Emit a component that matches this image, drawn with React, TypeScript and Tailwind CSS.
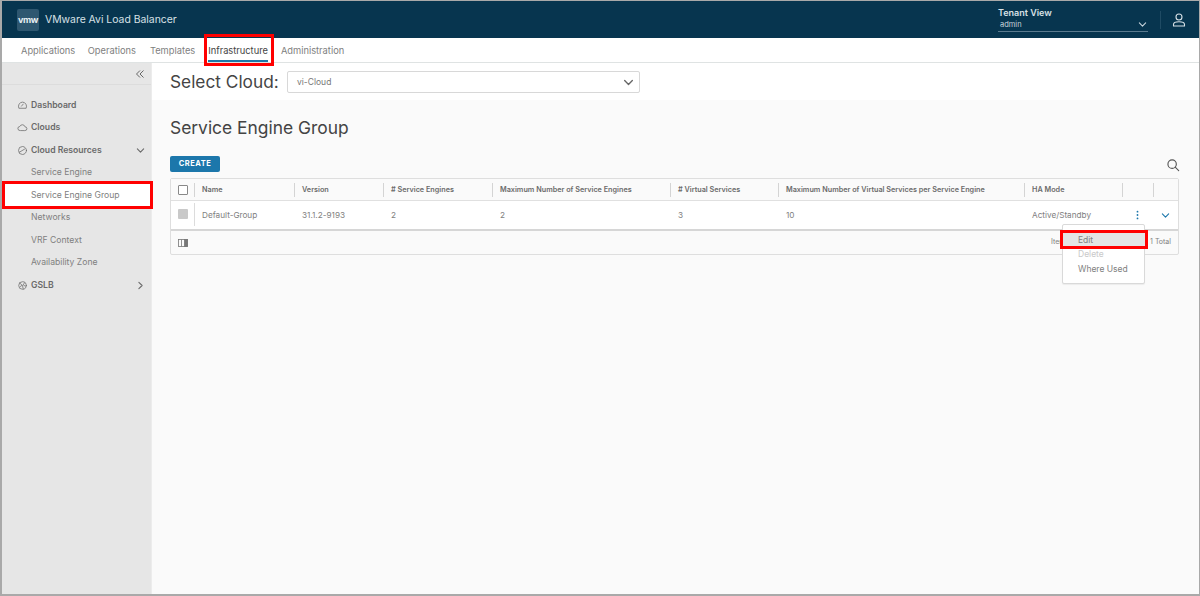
import React from "react";

const F = "font-['Inter','Liberation_Sans',sans-serif]";

function Ic({ children, className = "" }: { children: React.ReactNode; className?: string }) {
  return (
    <svg viewBox="0 0 16 16" fill="none" stroke="currentColor" strokeWidth="1.1" strokeLinecap="round" strokeLinejoin="round" className={className}>
      {children}
    </svg>
  );
}

const Chevron = ({ dir = "down", className = "" }: { dir?: "down" | "right"; className?: string }) => (
  <svg viewBox="0 0 10 10" fill="none" stroke="currentColor" strokeWidth="1.2" strokeLinecap="round" strokeLinejoin="round" className={className}>
    {dir === "down" ? <path d="M1.5 3.2 5 6.8l3.5-3.6" /> : <path d="M3.2 1.5 6.8 5 3.2 8.5" />}
  </svg>
);

const columns = [
  { name: "Version", value: "31.1.2-9193", w: "w-[89px]" },
  { name: "# Service Engines", value: "2", w: "w-[109px]" },
  { name: "Maximum Number of Service Engines", value: "2", w: "w-[178px]" },
  { name: "# Virtual Services", value: "3", w: "w-[108px]" },
  { name: "Maximum Number of Virtual Services per Service Engine", value: "10", w: "w-[246px]" },
  { name: "HA Mode", value: "Active/Standby", w: "w-[98px]" },
];

function Cell({ w, children, head, rule }: { w: string; children?: React.ReactNode; head?: boolean; rule?: boolean }) {
  return (
    <div className={`${w} shrink-0 flex items-center self-stretch relative pl-[8px] whitespace-nowrap`}>
      {head && <span className="absolute left-0 w-px bg-[#d4d4d4] top-[3px] bottom-[3px]" />}
      {rule && <span className="absolute left-0 w-px bg-[#dcdcdc] top-[2px] bottom-[3px]" />}
      {children}
    </div>
  );
}

export default function App() {
  return (
    <div className={`${F} w-[1200px] h-[596px] overflow-hidden flex flex-col border-l-2 border-r border-t border-b-2 border-[#a9a9a9] bg-[#fafafa] text-[#666]`}>
      <header className="h-[37px] shrink-0 bg-[#07354f] flex items-center pl-[15px] text-white">
        <div className="w-[22px] h-[22px] bg-[#2e5770] rounded-[2px] flex items-center justify-center text-[9px] font-bold tracking-[-0.5px] text-[#e8eef2]">vmw</div>
        <div className="ml-[6px] text-[10.400px] text-[#d7e0e6]">VMware Avi Load Balancer</div>
        <div className="ml-auto w-[150px] mr-[6px] mt-[-1px]">
          <div className="text-[9px] font-semibold leading-[12px] text-[#d7e0e6]">Tenant View</div>
          <div className="flex items-center justify-between border-b border-[#5a7a8e] h-[13px] pl-[2px] pr-[1px]">
            <span className="text-[7.5px] leading-[12px] text-[#c8d4dc]">admin</span>
            <Chevron className="w-[9px] h-[9px] text-[#c8d4dc]" />
          </div>
        </div>
        <div className="w-px h-[18px] bg-[#1f4b64] ml-[6px]" />
        <div className="w-[38px] pr-[2px] flex justify-center text-[#d7e0e6]">
          <Ic className="w-[16px] h-[16px]">
            <circle cx="8" cy="5" r="3" />
            <path d="M2.5 14v-1.6C2.5 11 5 9.8 8 9.8s5.500 1.200 5.500 2.600V14z" />
          </Ic>
        </div>
      </header>

      <nav className="h-[25px] shrink-0 bg-white border-b border-[#dfe3e3] flex items-center pl-[19px] pt-[1px] text-[9.300px] text-[#808080] relative">
        <span className="mr-[12.500px]">Applications</span>
        <span className="mr-[14px]">Operations</span>
        <span className="mr-[13px]">Templates</span>
        <span className="mr-[13px] text-[#444] relative h-full flex items-center">
          Infrastructure
          <span className="absolute left-0 right-0 bottom-0 h-[2px] bg-[#1f78a8]" />
          <span className="absolute left-[-4px] right-[-6px] top-[-5px] bottom-[-4px] border-[3px] border-[#f00]" />
        </span>
        <span>Administration</span>
      </nav>

      <div className="flex-1 flex min-h-0">
        <aside className="w-[150px] shrink-0 bg-[#e6e6e6] border-r border-[#ececec] text-[8.650px]">
          <div className="h-[22px] pt-[1px] border-b border-[#dcdcdc] flex items-center justify-end pr-[6px] text-[#666]">
            <svg viewBox="0 0 10 10" fill="none" stroke="currentColor" strokeWidth="1" className="w-[10px] h-[10px]">
              <path d="M5 1.500 1.500 5 5 8.500M8.500 1.500 5 5l3.500 3.500" />
            </svg>
          </div>
          <div className="pt-[9px]">
            <NavHead label="Dashboard" icon={<><path d="M2.500 11.500a6 6 0 1 1 11 0z" /><path d="m6.500 9 2.500-3" /></>} />
            <NavHead label="Clouds" icon={<path d="M4.500 12.500a3 3 0 0 1-.4-6 4 4 0 0 1 7.600.6 2.700 2.700 0 0 1 .1 5.400z" />} />
            <NavHead label="Cloud Resources" chevron="down" icon={<><circle cx="8" cy="8" r="5.800" /><path d="M3.500 10.500 11 6" /></>} />
            <NavSub label="Service Engine" />
            <div className="relative h-[28px] -my-[2.750px] bg-white border-[3px] border-[#f00] flex items-center pl-[26px] -mr-[2px] text-[#808080]">Service Engine Group</div>
            <NavSub label="Networks" />
            <NavSub label="VRF Context" />
            <NavSub label="Availability Zone" />
            <NavHead label="GSLB" chevron="right" icon={<><circle cx="8" cy="8" r="5.500" /><path d="M4 4.500 7 7l-2 3M11 4l-2 3 3 2M8 8l1 5" /></>} />
          </div>
        </aside>

        <main className="flex-1 min-w-0">
          <div className="h-[37px] bg-white flex items-center pl-[18px]">
            <span className="w-[117px] whitespace-nowrap text-[17.300px] text-[#444]">Select Cloud:</span>
            <div className="w-[353px] h-[22px] mt-[1px] bg-white border border-[#d8d8d8] rounded-[2px] flex items-center justify-between pl-[9px] pr-[5px] text-[8.500px] text-[#777]">
              vi-Cloud
              <Chevron className="w-[11px] h-[11px] text-[#666]" />
            </div>
          </div>

          <div className="pl-[18px] pr-[20px]">
            <h1 className="mt-[16px] text-[17.400px] leading-[24px] text-[#444]">Service Engine Group</h1>
            <div className="mt-[14px] flex items-end justify-between h-[18px]">
              <button className="w-[50px] h-[16px] rounded-[2px] bg-[#1c77ab] text-white text-[7.500px] font-bold tracking-[0.5px] flex items-center justify-center">CREATE</button>
              <svg viewBox="0 0 16 16" fill="none" stroke="currentColor" strokeWidth="1.300" className="w-[14px] h-[14px] text-[#555] mr-[-1px]">
                <circle cx="7" cy="7" r="4.800" />
                <path d="m10.500 10.500 4 4" strokeLinecap="round" />
              </svg>
            </div>

            <div className="mt-[6px] w-[1009px] h-[77px] border border-[#dedede] rounded-[2px] bg-[#fafafa] relative text-[#808080]">
              <div className="h-[22px] pt-[1px] bg-[#fafafa] border-b border-[#e0e0e0] flex items-center text-[7.250px] font-semibold text-[#6b6b6b]">
                <div className="w-[23px] shrink-0 flex justify-center">
                  <div className="w-[10px] h-[10px] bg-white border border-[#888] rounded-[1px]" />
                </div>
                <Cell w="w-[100px]" head>Name</Cell>
                {columns.map((c) => (
                  <Cell key={c.name} w={c.w} head>{c.name}</Cell>
                ))}
                <Cell w="w-[31px]" head />
                <Cell w="w-[27px]" head />
              </div>
              <div className="h-[30px] bg-white border-b-2 border-[#d6d6d6] flex items-center text-[8.200px]">
                <div className="w-[23px] shrink-0 flex justify-center pb-[2px]">
                  <div className="w-[10px] h-[10px] bg-[#c9c9c9] rounded-[1px]" />
                </div>
                <Cell w="w-[100px]" rule>Default-Group</Cell>
                {columns.map((c) => (
                  <Cell key={c.name} w={c.w}>{c.value}</Cell>
                ))}
                <div className="w-[31px] shrink-0 flex justify-center text-[#1c77ab]">
                  <svg viewBox="0 0 4 12" className="w-[3px] h-[10px]" fill="currentColor">
                    <circle cx="2" cy="1.500" r="1.200" />
                    <circle cx="2" cy="6" r="1.200" />
                    <circle cx="2" cy="10.500" r="1.200" />
                  </svg>
                </div>
                <div className="w-[25px] shrink-0 flex justify-center text-[#1c77ab]">
                  <Chevron className="w-[9px] h-[9px]" />
                </div>
              </div>
              <div className="h-[23px] flex items-center justify-between pl-[7px] pr-[7px] text-[7px]">
                <svg viewBox="0 0 10 8" className="w-[10px] h-[8px] text-[#777]" fill="none" stroke="currentColor" strokeWidth="0.800">
                  <rect x="0.500" y="0.500" width="9" height="7" />
                  <path d="M3.500 .5v7" />
                  <rect x="6.500" y="0.500" width="3" height="7" fill="currentColor" />
                </svg>
                <span className="flex">
                  <span className="mr-[81px]">Items</span>
                  <span>1 Total</span>
                </span>
              </div>

              <div className="absolute left-[891px] top-[45px] w-[83px] h-[60px] bg-white border border-[#d9d9d9] rounded-[2px] text-[8.500px] text-[#808080] shadow-[0_1px_1px_rgba(0,0,0,0.06)]">
                <div className="absolute left-[-3px] top-[5px] w-[88px] h-[19px] pt-[1px] bg-[#e4e4e4] border-[3px] border-[#f00] flex items-center pl-[15px]">Edit</div>
                <div className="absolute left-[15px] top-[22px] leading-[14px] text-[#c9c9c9]">Delete</div>
                <div className="absolute left-[15px] top-[36.500px] leading-[14px] whitespace-nowrap">Where Used</div>
              </div>
            </div>
          </div>
        </main>
      </div>
    </div>
  );
}

function NavHead({ label, icon, chevron }: { label: string; icon: React.ReactNode; chevron?: "down" | "right" }) {
  return (
    <div className="h-[22.500px] flex items-center pl-[15px] pr-[6px] font-semibold text-[#6a6a6a]">
      <Ic className="w-[11px] h-[11px] mr-[3px] shrink-0">{icon}</Ic>
      {label}
      {chevron && <Chevron dir={chevron} className="ml-auto w-[9px] h-[9px]" />}
    </div>
  );
}

function NavSub({ label }: { label: string }) {
  return <div className="h-[22.500px] flex items-center pl-[29px] text-[#808080]">{label}</div>;
}
